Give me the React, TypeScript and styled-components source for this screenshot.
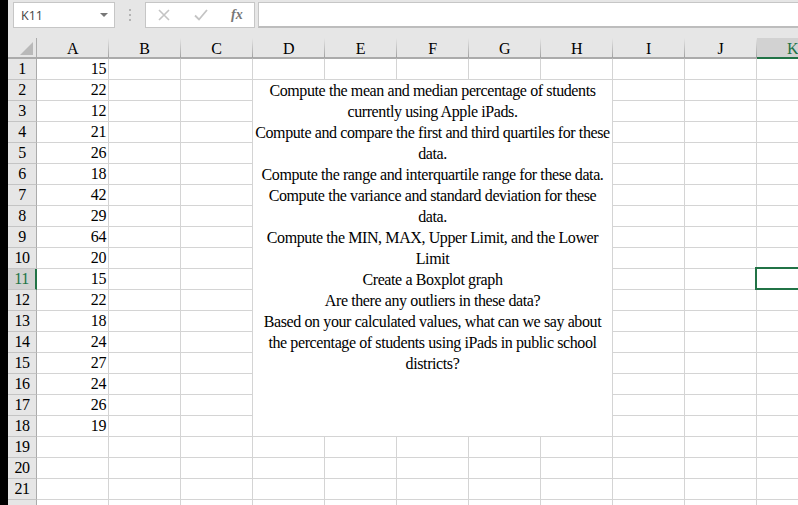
import React from "react";
import styled, { createGlobalStyle } from "styled-components";

const Global = createGlobalStyle`
  html, body { margin: 0; padding: 0; width: 798px; height: 505px; overflow: hidden; background: #fff; }
  * { box-sizing: border-box; }
`;
const Page = styled.div`
  display: flex; width: 798px; height: 505px; overflow: hidden; background: #000;
`;
const Sidebar = styled.div`width: 8px; flex: none; background: #000;`;
const Main = styled.div`
  flex: none; width: 790px; height: 505px; background: #e6e6e6; display: flex; flex-direction: column; overflow: hidden;
`;
const FormulaBar = styled.div`
  height: 38px; flex: none; display: flex; align-items: flex-start; padding: 2px 0 0 5px;
`;
const NameBox = styled.div`
  width: 102px; height: 26px; background: #fff; border: 1px solid #c6c6c6; display: flex; align-items: center;
  justify-content: space-between; padding: 0 6px 0 7px;
  font: 12.5px "Open Sans", sans-serif; color: #444;
`;
const Caret = styled.span`
  width: 0; height: 0; border-left: 4px solid transparent; border-right: 4px solid transparent; border-top: 4px solid #777;
`;
const Grip = styled.div`
  width: 2px; height: 12px; margin: 7px 14px 0 14px; flex: none;
  background: repeating-linear-gradient(#b4b4b4 0 2px, transparent 2px 5px);
`;
const FnBox = styled.div`
  width: 110px; height: 26px; background: #fff; border: 1px solid #c6c6c6; display: flex; align-items: center;
  padding: 0 0 0 12px; gap: 24px; flex: none;
`;
const Fx = styled.span`
  font: italic bold 14px "Liberation Serif", serif; color: #777; margin-left: -1px;
`;
const FormulaInput = styled.div`
  flex: 1; height: 26px; margin-left: 3px; background: #fff; border: 1px solid #c6c6c6; border-right: 0;
  border-bottom: 2px solid #bdbdbd;
`;
const Sheet = styled.div`
  display: grid; grid-template-columns: 29px repeat(10, 72px) 72px; grid-auto-rows: 21px; width: 821px;
  font: 16px/20px "Liberation Serif", "Times New Roman", serif; letter-spacing: -0.4px; color: #000;
`;
const Corner = styled.div`
  background: #e6e6e6; border-right: 1px solid #ababab; border-bottom: 2px solid #ababab; position: relative;
  &::after {
    content: ""; position: absolute; right: 3px; bottom: 2px; width: 0; height: 0;
    border-style: solid; border-width: 0 0 13px 13px; border-color: transparent transparent #b9b9b9 transparent;
  }
`;
const ColHead = styled.div<{ $active?: boolean }>`
  background: ${p => (p.$active ? "#d2d2d2" : "#e6e6e6")};
  border-bottom: 2px solid ${p => (p.$active ? "#217346" : "#ababab")};
  border-right: 1px solid transparent;
  position: relative;
  text-align: center; line-height: 22px; color: ${p => (p.$active ? "#217346" : "#000")};
  &::after {
    content: ""; position: absolute; top: 0; bottom: -1px; right: -1px; width: 1px;
    background: linear-gradient(#e6e6e6, #a0a0a0);
  }
`;
const RowHead = styled.div<{ $active?: boolean }>`
  background: ${p => (p.$active ? "#d2d2d2" : "#e6e6e6")};
  border-right: ${p => (p.$active ? "2px solid #217346" : "1px solid #ababab")};
  border-bottom: 1px solid #c4c4c4;
  text-align: center; color: ${p => (p.$active ? "#217346" : "#000")};
`;
const Cell = styled.div`
  background: #fff; border-right: 1px solid #d4d4d4; border-bottom: 1px solid #d4d4d4;
  text-align: right; padding-right: 2px;
`;
const SelectedCell = styled(Cell)`
  position: relative;
  &::after { content: ""; position: absolute; inset: -2px -1px -1px -2px; border: 2px solid #217346; }
`;
const Merged = styled.div`
  grid-column: 5 / 10; grid-row: 3 / 20;
  background: #fff; border-right: 1px solid #d4d4d4; border-bottom: 1px solid #d4d4d4;
  text-align: center; line-height: 21px; padding: 0 1px;
`;

const cols = ["A", "B", "C", "D", "E", "F", "G", "H", "I", "J", "K"];
const values: Record<number, number> = {
  1: 15, 2: 22, 3: 12, 4: 21, 5: 26, 6: 18, 7: 42, 8: 29, 9: 64, 10: 20, 11: 15, 12: 22, 13: 18, 14: 24, 15: 27, 16: 24, 17: 26, 18: 19,
};
const lines = [
  "Compute the mean and median percentage of students currently using Apple iPads.",
  "Compute and compare the first and third quartiles for these data.",
  "Compute the range and interquartile range for these data.",
  "Compute the variance and standard deviation for these data.",
  "Compute the MIN, MAX, Upper Limit, and the Lower Limit",
  "Create a Boxplot graph",
  "Are there any outliers in these data?",
  "Based on your calculated values, what can we say about the percentage of students using iPads in public school districts?",
];

const rows = Array.from({ length: 22 }, (_, i) => i + 1);

export default function App() {
  return (
    <Page>
      <Global />
      <Sidebar />
      <Main>
        <FormulaBar>
          <NameBox>K11<Caret /></NameBox>
          <Grip />
          <FnBox>
            <svg width="12" height="12" viewBox="0 0 12 12" fill="none" stroke="#c4c4c4" strokeWidth="1.6">
              <path d="M1 1l10 10M11 1L1 11" />
            </svg>
            <svg width="14" height="12" viewBox="0 0 14 12" fill="none" stroke="#c4c4c4" strokeWidth="1.8">
              <path d="M1 6.5l4 4L13 1" />
            </svg>
            <Fx>fx</Fx>
          </FnBox>
          <FormulaInput />
        </FormulaBar>
        <Sheet>
          <Corner />
          {cols.map(c => (
            <ColHead key={c} $active={c === "K"}>{c}</ColHead>
          ))}
          {rows.map(r => (
            <React.Fragment key={r}>
              <RowHead $active={r === 11}>{r < 22 ? r : null}</RowHead>
              {cols.map((c, i) => {
                const inMerged = r >= 2 && r <= 18 && i >= 3 && i <= 7;
                if (inMerged) {
                  if (r === 2 && i === 3) {
                    return <Merged key={c}>{lines.map(l => <div key={l}>{l}</div>)}</Merged>;
                  }
                  return null;
                }
                if (c === "K" && r === 11) return <SelectedCell key={c} />;
                return <Cell key={c}>{c === "A" ? values[r] : null}</Cell>;
              })}
            </React.Fragment>
          ))}
        </Sheet>
      </Main>
    </Page>
  );
}
